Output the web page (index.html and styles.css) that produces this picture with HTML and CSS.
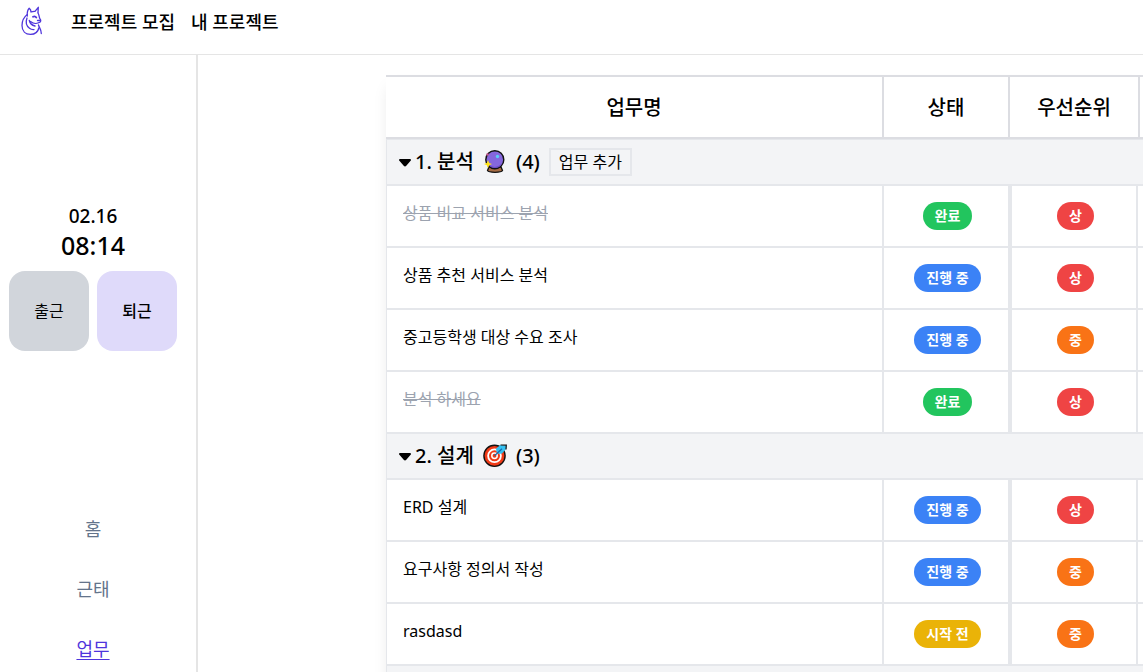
FILE: index.html
```html
<!DOCTYPE html>
<html lang="ko">

<head>
    <meta charset="UTF-8">
    <meta name="viewport" content="width=device-width, initial-scale=1.0">
    <title>내 프로젝트 - 업무</title>
    <link rel="stylesheet" href="styles.css">
</head>

<body>
    <header class="header">
        <a href="#" class="logo" aria-label="홈으로">
            <svg width="24" height="32" viewBox="0 0 24 32" fill="none" stroke="#4f35dc" stroke-width="1.3" stroke-linecap="round" stroke-linejoin="round">
                <path d="M7.300 9.500C4 12 2 16 2 20.500C2 26 5.500 29.300 10.500 29.300C14.500 29.300 18 27 18.800 23" />
                <path d="M7.300 11C7 8 7.500 5 9.200 3.300C10.500 4.300 11 5.500 11 7C13 6.300 14 6.200 15 6.400L18.300 2.300L18 7.500" />
                <path d="M18 8C19.300 10 19 12 20 14C21 15 21 16.500 19.800 17.300C17.500 18.800 13.500 18.800 10.500 16.500" />
                <path d="M13 11.800C14 11.200 15.500 11.300 16.300 12.500" stroke-width="1.800" />
                <path d="M17.500 15.500H19.500" />
                <path d="M7 13C5.500 17 6.500 21 9.500 23.300C11 24.500 12.500 24.800 14 24.600" />
                <path d="M9.300 15.500C10 18.500 12 20.300 15 21" />
                <path d="M18.500 20C19 22.500 21.300 24 21.300 28.500" />
            </svg>
        </a>
        <nav class="menu">
            <a href="#">프로젝트 모집</a>
            <a href="#">내 프로젝트</a>
        </nav>
    </header>

    <div class="container">
        <aside class="sidebar">
            <div class="clock">
                <p class="date">02.16</p>
                <p class="time">08:14</p>
            </div>
            <div class="attend">
                <button type="button" class="attend-btn">출근</button>
                <button type="button" class="attend-btn leave">퇴근</button>
            </div>
            <nav class="side-menu">
                <a href="#">홈</a>
                <a href="#">근태</a>
                <a href="#" class="active">업무</a>
            </nav>
        </aside>

        <main class="main">
            <table class="task-table">
                <colgroup>
                    <col>
                    <col class="col-status">
                    <col class="col-priority">
                    <col class="col-gap">
                    <col class="col-more">
                </colgroup>
                <thead>
                    <tr>
                        <th>업무명</th>
                        <th>상태</th>
                        <th colspan="2">우선순위</th>
                        <th class="more"></th>
                    </tr>
                </thead>
                <tbody>
                    <tr class="group first">
                        <td colspan="5">
                            <div class="group-title">
                                <svg class="caret" width="12" height="12" viewBox="0 0 12 12"><path d="M1 3H11C12 3 12.300 4 11.600 4.800L7.300 9.800C6.500 10.700 5.500 10.700 4.700 9.800L.4 4.800C-.3 4 0 3 1 3Z" /></svg>
                                <span class="group-name">1. 분석</span>
                                <!-- 수정 구슬 -->
                                <svg class="emoji" width="24" height="24" viewBox="0 0 24 24">
                                    <path d="M6 17H18L19.500 20.500Q18.500 22.300 12 22.300Q5.500 22.300 4.500 20.500Z" fill="#a66b43" stroke="#111" stroke-width="1.300" />
                                    <circle cx="11.800" cy="9.700" r="9" fill="#8567dc" stroke="#111" stroke-width="1.400" />
                                    <path d="M5 14Q12 20 19 13.500Q17 18 11.800 18Q7.500 18 5 14Z" fill="#6c4bc4" />
                                    <circle cx="14.500" cy="6.500" r="1.700" fill="#5bcdf5" />
                                    <circle cx="4.500" cy="4.500" r="1.300" fill="#c0568f" />
                                    <path d="M5 10L6.200 13L9 14L6.200 15.200L5 18L3.800 15.200L1 14L3.800 13Z" fill="#ffe31a" />
                                </svg>
                                <span class="count">(4)</span>
                                <button type="button" class="add-btn">업무 추가</button>
                            </div>
                        </td>
                    </tr>
                    <tr>
                        <td class="name done">상품 비교 서비스 분석</td>
                        <td><span class="badge green">완료</span></td>
                        <td class="priority"><span class="badge red">상</span></td>
                        <td colspan="2" class="more"></td>
                    </tr>
                    <tr>
                        <td class="name">상품 추천 서비스 분석</td>
                        <td><span class="badge blue">진행 중</span></td>
                        <td class="priority"><span class="badge red">상</span></td>
                        <td colspan="2" class="more"></td>
                    </tr>
                    <tr>
                        <td class="name">중고등학생 대상 수요 조사</td>
                        <td><span class="badge blue">진행 중</span></td>
                        <td class="priority"><span class="badge orange">중</span></td>
                        <td colspan="2" class="more"></td>
                    </tr>
                    <tr>
                        <td class="name done">분석 하세요</td>
                        <td><span class="badge green">완료</span></td>
                        <td class="priority"><span class="badge red">상</span></td>
                        <td colspan="2" class="more"></td>
                    </tr>
                </tbody>
                <tbody>
                    <tr class="group">
                        <td colspan="5">
                            <div class="group-title">
                                <svg class="caret" width="12" height="12" viewBox="0 0 12 12"><path d="M1 3H11C12 3 12.300 4 11.600 4.800L7.300 9.800C6.500 10.700 5.500 10.700 4.700 9.800L.4 4.800C-.3 4 0 3 1 3Z" /></svg>
                                <span class="group-name">2. 설계</span>
                                <!-- 과녁 -->
                                <svg class="emoji" width="24" height="24" viewBox="0 0 24 24">
                                    <circle cx="11.500" cy="11.800" r="10.600" fill="#f03a17" stroke="#111" stroke-width="1.400" />
                                    <circle cx="11.500" cy="11.800" r="6.400" fill="none" stroke="#fff" stroke-width="1.800" />
                                    <circle cx="11.500" cy="11.800" r="2.700" fill="none" stroke="#fff" stroke-width="1.500" />
                                    <path d="M13.500 8L13 4.500L17.500 1L20 1.200L23.300 1.500L23 5L19 9.500L16 10Z" fill="#35c1f1" />
                                    <path d="M17.500 1L23.300 1.200L23 5.500" fill="none" stroke="#111" stroke-width="1.200" />
                                    <path d="M11.500 11.800L19 4.800" stroke="#1769b0" stroke-width="1.200" />
                                </svg>
                                <span class="count">(3)</span>
                            </div>
                        </td>
                    </tr>
                    <tr>
                        <td class="name">ERD 설계</td>
                        <td><span class="badge blue">진행 중</span></td>
                        <td class="priority"><span class="badge red">상</span></td>
                        <td colspan="2" class="more"></td>
                    </tr>
                    <tr>
                        <td class="name">요구사항 정의서 작성</td>
                        <td><span class="badge blue">진행 중</span></td>
                        <td class="priority"><span class="badge orange">중</span></td>
                        <td colspan="2" class="more"></td>
                    </tr>
                    <tr>
                        <td class="name">rasdasd</td>
                        <td><span class="badge yellow">시작 전</span></td>
                        <td class="priority"><span class="badge orange">중</span></td>
                        <td colspan="2" class="more"></td>
                    </tr>
                </tbody>
                <tbody>
                    <tr class="group">
                        <td colspan="5"></td>
                    </tr>
                </tbody>
            </table>
        </main>
    </div>
</body>

</html>
```
FILE: styles.css
```css
* {
    margin: 0;
    padding: 0;
    box-sizing: border-box;
}

body {
    height: 100vh;
    overflow: hidden;
    display: flex;
    flex-direction: column;
    background: #fff;
    color: #000;
    font: 16px/24px "Noto Sans", "Noto Sans CJK KR", sans-serif;
}

a {
    color: inherit;
    text-decoration: none;
}

button {
    font: inherit;
    color: inherit;
    cursor: pointer;
}

/* header */
.header {
    display: flex;
    align-items: center;
    gap: 27px;
    padding: 5px 20px 17px;
    border-bottom: 1px solid #e5e5e5;
}

.logo svg {
    display: block;
}

.menu {
    display: flex;
    gap: 16px;
    padding-top: 2px;
    font-size: 18px;
    font-weight: 500;
}

.container {
    flex: 1;
    min-height: 0;
    display: flex;
}

/* sidebar */
.sidebar {
    flex: none;
    width: 198px;
    padding: 147px 19px 0 9px;
    border-right: 2px solid #e5e5e5;
    text-align: center;
}

.date {
    font-size: 19px;
    line-height: 28px;
    font-weight: 500;
}

.time {
    font-size: 25px;
    line-height: 30px;
    font-weight: 500;
}

.attend {
    display: flex;
    gap: 8px;
    margin-top: 11px;
}

.attend-btn {
    flex: 1;
    height: 80px;
    border: none;
    border-radius: 16px;
    background: #d1d5db;
}

.attend-btn.leave {
    background: #dfdafa;
    font-weight: 500;
}

.side-menu {
    display: flex;
    flex-direction: column;
    align-items: center;
    gap: 32px;
    margin-top: 164px;
    font-size: 18px;
    line-height: 28px;
    color: #64748b;
}

.side-menu .active {
    color: #4f35dc;
    text-decoration: underline;
    text-underline-offset: 3px;
}

/* task table */
.main {
    flex: 1;
    overflow: hidden;
    padding: 20px 0 0 188px;
}

.task-table {
    width: 100%;
    table-layout: fixed;
    border-spacing: 0;
    box-shadow: 0 10px 15px -3px rgba(0, 0, 0, .1);
}

.col-status {
    width: 126px;
}

.col-priority {
    width: 128px;
}

.col-gap {
    width: 2px;
}

.col-more {
    width: 3px;
}

th {
    height: 64px;
    padding-top: 2px;
    border: 2px solid #dcdde2;
    border-left: none;
    font-size: 20px;
    font-weight: 500;
}

td {
    height: 62px;
    padding: 16px 0 0 3px;
    border-right: 2px solid #e5e7eb;
    border-bottom: 2px solid #e5e7eb;
    text-align: center;
    vertical-align: top;
}

td:first-child {
    border-left: 1px solid #e5e7eb;
}

.name {
    padding: 15px 16px 0;
    text-align: left;
}

.done {
    color: #9ca3af;
    text-decoration: line-through;
}

.priority {
    border-left: 2px solid #e5e7eb;
}

.more {
    border-right: none;
}

.group td {
    height: 46px;
    padding: 0 12px;
    border-right: none;
    background: #f3f4f6;
    vertical-align: middle;
}

.group.first td {
    height: 47px;
    border-top: 1px solid #e5e7eb;
}

.group-title {
    display: flex;
    align-items: center;
    gap: 9px;
    font-size: 20px;
    line-height: 28px;
    font-weight: 500;
}

.group-name {
    margin-left: -5px;
}

.add-btn {
    padding: 0 8px;
    border: 2px solid #e5e7eb;
    background: none;
    font-size: 16px;
    line-height: 24px;
    font-weight: 400;
}

.badge {
    display: inline-block;
    padding: 4px 12px;
    border-radius: 14px;
    color: #fff;
    font-size: 14px;
    line-height: 20px;
    font-weight: 700;
}

.green {
    background: #22c55e;
}

.blue {
    background: #3b82f6;
}

.yellow {
    background: #eab308;
}

.red {
    background: #ef4444;
}

.orange {
    background: #f97316;
}
```
